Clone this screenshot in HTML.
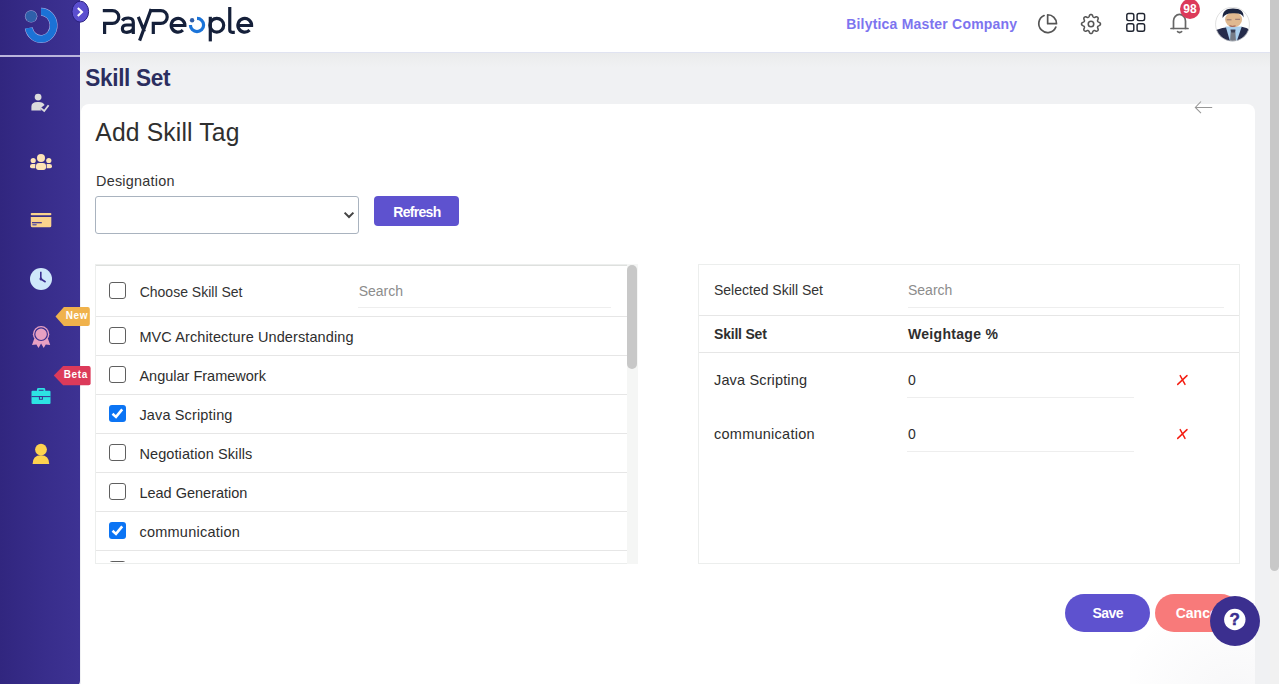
<!DOCTYPE html>
<html><head><meta charset="utf-8">
<style>
*{box-sizing:border-box;margin:0;padding:0}
html,body{width:1279px;height:684px;overflow:hidden;background:#f0f1f3;font-family:"Liberation Sans",sans-serif;color:#333}
.a{position:absolute;white-space:nowrap;line-height:1}
#sb{position:absolute;left:0;top:0;width:80px;height:687px;background:linear-gradient(90deg,#31267f 0%,#382d8b 55%,#3d3293 100%);border-bottom-right-radius:6px}
#hdr{position:absolute;left:80px;top:0;width:1190px;height:53px;background:#fff;border-bottom:1px solid #e0e3f1}
#card{position:absolute;left:81px;top:104px;width:1174px;height:600px;background:#fff;border-radius:8px}
#pscroll{position:absolute;left:1270px;top:0;width:9px;height:684px;background:#f1f1f1}
#pthumb{position:absolute;left:1270px;top:0;width:9px;height:571px;background:#c8c8c8;border-radius:0 0 5px 5px}
.panel{position:absolute;background:#fff;border:1px solid #eceeed}
.hl{position:absolute;height:1px;background:#e6e6e6}
.cb{position:absolute;width:17px;height:17px;border:1.5px solid #5f5f5f;border-radius:3px;background:#fff}
.cbc{position:absolute;width:17px;height:17px;border-radius:3px;background:#0b74f4}
.t14{font-size:14px;color:#333}
.li{font-size:14.5px;color:#2e2e2e}
</style></head><body>
<div id="pscroll"></div><div id="pthumb"></div>
<div class="a" style="left:80px;top:53px;width:1190px;height:14px;background:linear-gradient(180deg,#eaebec,rgba(240,241,243,0))"></div>
<div id="hdr"></div>
<div id="card"></div>

<!-- sidebar -->
<div id="sb"></div>
<div class="a" style="left:0;top:55px;width:80px;height:2px;background:#bab5dc"></div>
<svg class="a" style="left:0;top:0" width="100" height="60" viewBox="0 0 100 60">
  <path d="M41.05 11.75 A12.55 13.65 0 1 1 28.73 28" fill="none" stroke="#bdb6e6" stroke-width="7.9"/><path d="M41.05 11.75 A12.55 13.65 0 1 1 28.73 28" fill="none" stroke="#1b72d6" stroke-width="7"/>
  <circle cx="31.15" cy="16.35" r="6.2" fill="#a9a3d8"/><circle cx="31.15" cy="16.35" r="5.7" fill="#2f60aa"/>
  <ellipse cx="80.3" cy="11.65" rx="8.3" ry="10.5" fill="#5b4fcf" stroke="#2a2080" stroke-width="1"/>
  <path d="M77.8 7.9 L82 11.9 L77.8 16" fill="none" stroke="#fff" stroke-width="2.1"/>
</svg>
<!-- icon1 person check -->
<svg class="a" style="left:0;top:80px" width="80" height="40" viewBox="0 80 80 40">
  <circle cx="38.1" cy="97.1" r="3.4" fill="#dcdcdc"/>
  <path d="M31.4 110.4 V106.5 Q31.4 102 37.5 102 H39 Q43 102 44.6 105 L40 108.5 L41.5 110.4 Z" fill="#dcdcdc"/>
  <path d="M40.2 107.6 L44.2 111 L48.6 105.3" fill="none" stroke="#dcdcdc" stroke-width="1.8"/>
</svg>
<!-- icon2 group -->
<svg class="a" style="left:0;top:140px" width="80" height="40" viewBox="0 140 80 40">
  <g fill="#fde3b6">
  <circle cx="41" cy="158.1" r="4"/>
  <path d="M36 166 Q36 163.1 39 163.1 H43 Q46 163.1 46 166 V167.3 Q46 169.9 43.4 169.9 H38.6 Q36 169.9 36 167.3 Z"/>
  <circle cx="33.2" cy="160.5" r="2.6"/>
  <path d="M30 166.3 Q30 164 32.3 164 H35.3 V168.2 H31.8 Q30 168.2 30 166.6 Z"/>
  <circle cx="48.8" cy="160.5" r="2.6"/>
  <path d="M46.7 168.2 V164 H49.7 Q52 164 52 166.3 V166.6 Q52 168.2 50.2 168.2 Z"/>
  </g>
</svg>
<!-- icon3 card -->
<svg class="a" style="left:0;top:200px" width="80" height="40" viewBox="0 200 80 40">
  <rect x="30.8" y="212.9" width="20.5" height="2.4" rx="0.8" fill="#fbd38d"/>
  <path d="M30.8 217 H51.3 V225.7 Q51.3 227.2 49.8 227.2 H32.3 Q30.8 227.2 30.8 225.7 Z" fill="#fbd38d"/>
  <rect x="32" y="222.1" width="9.8" height="1.2" fill="#3a2e8f"/>
  <rect x="32.2" y="224" width="4.6" height="1.5" rx="0.7" fill="#6a63a8"/>
</svg>
<!-- icon4 clock -->
<svg class="a" style="left:0;top:258px" width="80" height="40" viewBox="0 258 80 40">
  <circle cx="41" cy="279" r="11" fill="#cfe8fa"/>
  <path d="M40.8 271.8 V279 L45.6 282" fill="none" stroke="#3a2e8f" stroke-width="1.6"/>
  <circle cx="40.9" cy="279" r="1.4" fill="#3a2e8f"/>
</svg>
<!-- icon5 award -->
<svg class="a" style="left:0;top:320px" width="80" height="30" viewBox="0 320 80 30">
  <path d="M34.3 338.5 L32 345 L36.4 344.5 L38.5 348 L41.1 343.5 L43.7 348 L45.8 344.5 L50.2 345 L47.9 338.5 Z" fill="#e8a0c2"/>
  <circle cx="41.1" cy="334.2" r="8.2" fill="#e8a0c2"/>
  <circle cx="41.1" cy="334.2" r="6.3" fill="none" stroke="#392d8e" stroke-width="1.2"/>
</svg>
<!-- New tag -->
<svg class="a" style="left:50px;top:300px" width="45" height="30" viewBox="50 300 45 30">
  <path d="M55.5 316.5 L63.9 307 H87.8 Q89.8 307 89.8 309 V324 Q89.8 326 87.8 326 H63.9 Z" fill="#f0b24c"/>
</svg>
<div class="a" style="left:65.8px;top:311px;font-size:10px;font-weight:700;color:#fff;letter-spacing:0.6px">New</div>
<!-- Beta tag -->
<svg class="a" style="left:50px;top:360px" width="45" height="30" viewBox="50 360 45 30">
  <path d="M53.8 375.5 L63.1 366 H88.6 Q90.6 366 90.6 368 V383.2 Q90.6 385.2 88.6 385.2 H63.1 Z" fill="#dc3a5a"/>
</svg>
<div class="a" style="left:63.8px;top:370px;font-size:10px;font-weight:700;color:#fff;letter-spacing:0.6px">Beta</div>
<!-- icon6 briefcase -->
<svg class="a" style="left:0;top:380px" width="80" height="30" viewBox="0 380 80 30">
  <path d="M37.8 391 V389.3 Q37.8 388.8 38.6 388.8 H43.6 Q44.4 388.8 44.4 389.3 V391" fill="none" stroke="#2de3e3" stroke-width="1.7"/>
  <rect x="31.5" y="390.7" width="19" height="13.3" rx="1" fill="#2de3e3"/>
  <rect x="31.5" y="396.1" width="19" height="1" fill="#3a2e8f"/>
  <rect x="38.9" y="396.1" width="4" height="3.7" rx="0.4" fill="#3a2e8f"/>
  <rect x="39.9" y="397.1" width="2" height="1.7" fill="#2de3e3"/>
</svg>
<!-- icon7 person -->
<svg class="a" style="left:0;top:435px" width="80" height="40" viewBox="0 435 80 40">
  <g fill="#fdd24f">
  <circle cx="41" cy="449.6" r="5.9"/>
  <path d="M32.6 464 Q32.6 455.2 41 455.2 Q49.2 455.2 49.2 464 Z"/>
  </g>
</svg>

<!-- header -->
<svg class="a" style="left:95px;top:0" width="170" height="50" viewBox="95 0 170 50" fill="none" stroke="#15203a" stroke-width="3.2">
  <path d="M102.8 10.6 H112.4 A6.4 6.4 0 0 1 112.4 23.4 H104.6 V33.9"/>
  <path d="M122.3 20.6 Q124 18 128.3 18 Q133.3 18 133.3 22.5 V33.9"/>
  <path d="M133.3 25 H126.8 Q122.4 25 122.4 28.7 Q122.4 32.3 126.8 32.3 Q131.3 32.3 133.3 29.2"/>
  <path d="M138.3 16.8 L144.4 31.6 M151.2 9 L139.6 40.6"/>
  <path d="M149.6 10.6 H160.8 A6.4 6.4 0 0 1 160.8 23.4 H153.3 V33.9"/>
  <path d="M171.3 25.5 H184.9 A6.85 6.85 0 1 0 182.9 30.1"/>
  <path d="M210.3 41.4 V16.8"/><circle cx="216.8" cy="25.2" r="6.9"/>
  <path d="M229.75 6.9 V29.8 Q229.75 32.3 232.3 32.3 H234.8"/>
  <path d="M238 25.5 H251.6 A6.85 6.85 0 1 0 249.6 30.1"/>
  <path d="M197 18.35 A6.6 6.6 0 1 1 190.4 24.95" stroke="#1b74d9"/>
  <circle cx="192.1" cy="20.3" r="2.2" fill="#2f5ea8" stroke="none"/>
</svg>
<div class="a" style="left:846.2px;top:17px;font-size:14px;font-weight:700;color:#7d74ef;letter-spacing:0.2px">Bilytica Master Company</div>
<svg class="a" style="left:1036.8px;top:13.3px" width="21.3" height="21.3" viewBox="0 0 24 24" fill="none" stroke="#555" stroke-width="1.9" stroke-linecap="round" stroke-linejoin="round">
  <path d="M21.21 15.89A10 10 0 1 1 8 2.83"/><path d="M22 12A10 10 0 0 0 12 2v10z"/>
</svg>
<svg class="a" style="left:1079.1px;top:11.9px" width="24" height="24" viewBox="-12 -12 24 24" fill="none" stroke="#555" stroke-width="1.55">
  <path d="M0.00 -9.50 L0.37 -9.45 L0.73 -9.31 L1.07 -9.08 L1.39 -8.75 L1.63 -8.19 L1.83 -7.63 L2.05 -7.27 L2.27 -7.00 L2.51 -6.79 L2.76 -6.65 L3.03 -6.57 L3.34 -6.56 L3.69 -6.59 L4.10 -6.69 L4.64 -6.94 L5.21 -7.16 L5.66 -7.18 L6.07 -7.10 L6.42 -6.95 L6.72 -6.72 L6.95 -6.42 L7.10 -6.07 L7.18 -5.66 L7.16 -5.21 L6.94 -4.64 L6.69 -4.10 L6.59 -3.69 L6.56 -3.34 L6.57 -3.03 L6.65 -2.76 L6.79 -2.51 L7.00 -2.27 L7.27 -2.05 L7.63 -1.83 L8.19 -1.63 L8.75 -1.39 L9.08 -1.07 L9.31 -0.73 L9.45 -0.37 L9.50 0.00 L9.45 0.37 L9.31 0.73 L9.08 1.07 L8.75 1.39 L8.19 1.63 L7.63 1.83 L7.27 2.05 L7.00 2.27 L6.79 2.51 L6.65 2.76 L6.57 3.03 L6.56 3.34 L6.59 3.69 L6.69 4.10 L6.94 4.64 L7.16 5.21 L7.18 5.66 L7.10 6.07 L6.95 6.42 L6.72 6.72 L6.42 6.95 L6.07 7.10 L5.66 7.18 L5.21 7.16 L4.64 6.94 L4.10 6.69 L3.69 6.59 L3.34 6.56 L3.03 6.57 L2.76 6.65 L2.51 6.79 L2.27 7.00 L2.05 7.27 L1.83 7.63 L1.63 8.19 L1.39 8.75 L1.07 9.08 L0.73 9.31 L0.37 9.45 L0.00 9.50 L-0.37 9.45 L-0.73 9.31 L-1.07 9.08 L-1.39 8.75 L-1.63 8.19 L-1.83 7.63 L-2.05 7.27 L-2.27 7.00 L-2.51 6.79 L-2.76 6.65 L-3.03 6.57 L-3.34 6.56 L-3.69 6.59 L-4.10 6.69 L-4.64 6.94 L-5.21 7.16 L-5.66 7.18 L-6.07 7.10 L-6.42 6.95 L-6.72 6.72 L-6.95 6.42 L-7.10 6.07 L-7.18 5.66 L-7.16 5.21 L-6.94 4.64 L-6.69 4.10 L-6.59 3.69 L-6.56 3.34 L-6.57 3.03 L-6.65 2.76 L-6.79 2.51 L-7.00 2.27 L-7.27 2.05 L-7.63 1.83 L-8.19 1.63 L-8.75 1.39 L-9.08 1.07 L-9.31 0.73 L-9.45 0.37 L-9.50 0.00 L-9.45 -0.37 L-9.31 -0.73 L-9.08 -1.07 L-8.75 -1.39 L-8.19 -1.63 L-7.63 -1.83 L-7.27 -2.05 L-7.00 -2.27 L-6.79 -2.51 L-6.65 -2.76 L-6.57 -3.03 L-6.56 -3.34 L-6.59 -3.69 L-6.69 -4.10 L-6.94 -4.64 L-7.16 -5.21 L-7.18 -5.66 L-7.10 -6.07 L-6.95 -6.42 L-6.72 -6.72 L-6.42 -6.95 L-6.07 -7.10 L-5.66 -7.18 L-5.21 -7.16 L-4.64 -6.94 L-4.10 -6.69 L-3.69 -6.59 L-3.34 -6.56 L-3.03 -6.57 L-2.76 -6.65 L-2.51 -6.79 L-2.27 -7.00 L-2.05 -7.27 L-1.83 -7.63 L-1.63 -8.19 L-1.39 -8.75 L-1.07 -9.08 L-0.73 -9.31 L-0.37 -9.45Z"/><circle cx="0" cy="0" r="2.75"/>
</svg>
<svg class="a" style="left:1120px;top:8px" width="30" height="30" viewBox="1120 8 30 30" fill="none" stroke="#1f2430" stroke-width="1.45">
  <rect x="1126.8" y="13.5" width="7" height="7.1" rx="1.8"/>
  <rect x="1137.1" y="13.5" width="7.5" height="7.1" rx="1.8"/>
  <rect x="1126.8" y="23.8" width="7" height="7.5" rx="1.8"/>
  <rect x="1137.1" y="23.8" width="7.5" height="7.5" rx="1.8"/>
</svg>
<svg class="a" style="left:1165px;top:0" width="40" height="40" viewBox="1165 0 40 40" fill="none" stroke="#666" stroke-width="1.7" stroke-linecap="round">
  <path d="M1173.5 28.5 V21 A6 6.6 0 0 1 1185.5 21 V28.5"/>
  <path d="M1171 28.5 H1188"/>
  <path d="M1177.6 31.6 Q1179.6 33.4 1181.6 31.6"/>
  <circle cx="1190" cy="9" r="10" fill="#dc3a5a" stroke="none"/>
</svg>
<div class="a" style="left:1183.3px;top:2.8px;font-size:12px;font-weight:700;color:#fff">98</div>
<!-- avatar -->
<svg class="a" style="left:1215px;top:7px" width="35" height="35" viewBox="0 0 35 35">
  <defs><clipPath id="av"><circle cx="17.5" cy="17.2" r="17.1"/></clipPath></defs>
  <g clip-path="url(#av)">
  <rect width="35" height="35" fill="#fff"/>
  <path d="M10.5 19.5 H26.8 L25 35 H12Z" fill="#a9cfee"/>
  <path d="M0 35 V24 Q3 21.5 11 20.5 L15.2 35Z" fill="#252b4b"/>
  <path d="M35 35 V23 Q32 20.5 26.7 19.8 L21.5 35Z" fill="#252b4b"/>
  <path d="M15.8 23 H20.3 L21 35 H15Z" fill="#767b86"/>
  <path d="M15.5 22.5 H20.5 L19.8 25.5 H16.3Z" fill="#3a3f55"/>
  <ellipse cx="18.6" cy="12.6" rx="8.5" ry="7.6" fill="#e0b990"/>
  <path d="M14.5 18.8 Q17.5 20.2 20.5 18.9 Q17.5 19.6 14.5 18.8Z" fill="#8a4a4a" stroke="#9a5a55" stroke-width="0.6"/>
  <path d="M11.8 12.8 H16.5 M20.2 12.3 H25" stroke="#8a6a6a" stroke-width="0.9"/>
  <path d="M7.6 11 Q7 1.2 18.2 1.4 Q29.2 1.4 28.5 10.5 Q27.5 5.8 18.2 6.2 Q10 6 7.6 11Z" fill="#1c2540"/>
  </g>
  <circle cx="17.5" cy="17.2" r="16.95" fill="none" stroke="#d2d2d2" stroke-width="0.7"/>
</svg>

<!-- page title -->
<div class="a" style="left:85.3px;top:67px;font-size:22.6px;letter-spacing:-0.35px;transform:scaleY(1.06);transform-origin:0 0;font-weight:700;color:#2b2e5f">Skill Set</div>
<div class="a" style="left:95.3px;top:120px;font-size:24.7px;color:#2f2f2f;letter-spacing:0.15px;transform:scaleY(1.06);transform-origin:0 3.5px">Add Skill Tag</div>
<svg class="a" style="left:1193px;top:100px" width="22" height="15" viewBox="1193 100 22 15" fill="none" stroke="#979797" stroke-width="1.05">
  <path d="M1212.2 107.4 H1195.5 M1201 101.5 L1195.3 107.4 L1201 113.2"/>
</svg>

<div class="a" style="left:96px;top:174px;font-size:14.4px;color:#333;letter-spacing:0.25px">Designation</div>
<div class="a" style="left:95px;top:196px;width:264px;height:38px;border:1px solid #a9b3bf;border-radius:3px;background:#fff"></div>
<svg class="a" style="left:340px;top:205px" width="20" height="20" viewBox="340 205 20 20" fill="none" stroke="#444" stroke-width="2">
  <path d="M344.6 212.6 L349 217 L353.4 212.6"/>
</svg>
<div class="a" style="left:374px;top:196px;width:85px;height:30px;background:#5e52cf;border-radius:4px"></div>
<div class="a" style="left:393.3px;top:205px;font-size:14px;font-weight:700;color:#fff;letter-spacing:-0.7px">Refresh</div>

<!-- left panel -->
<div class="panel" style="left:95px;top:264px;width:543px;height:300px"></div>
<div class="hl" style="left:96px;top:265px;width:531px;background:#dee0de"></div>
<div class="a" style="left:627px;top:264px;width:11px;height:300px;background:#f5f6f5"></div>
<div class="a" style="left:627px;top:265px;width:10px;height:104px;background:#c8c8c8;border-radius:5px"></div>
<div class="cb" style="left:109px;top:282px"></div>
<div class="a t14" style="left:139.7px;top:285px">Choose Skill Set</div>
<div class="a" style="left:358.7px;top:284px;font-size:14px;color:#8c8c8c">Search</div>
<div class="hl" style="left:358px;top:307px;width:253px;background:#eeeeee"></div>
<div class="hl" style="left:96px;top:316px;width:531px"></div>
<div class="hl" style="left:96px;top:355px;width:531px"></div>
<div class="hl" style="left:96px;top:394px;width:531px"></div>
<div class="hl" style="left:96px;top:433px;width:531px"></div>
<div class="hl" style="left:96px;top:472px;width:531px"></div>
<div class="hl" style="left:96px;top:511px;width:531px"></div>
<div class="hl" style="left:96px;top:550px;width:531px"></div>

<div class="cb" style="left:109px;top:327px"></div>
<div class="a li" style="left:139.4px;top:330px;letter-spacing:0.1px">MVC Architecture Understanding</div>
<div class="cb" style="left:109px;top:366px"></div>
<div class="a li" style="left:139.4px;top:369px">Angular Framework</div>
<div class="cbc" style="left:109px;top:405px"></div>
<svg class="a" style="left:109px;top:405px" width="17" height="17" viewBox="0 0 17 17"><path d="M3.5 8.8 L7 11.9 L13.2 4.4" fill="none" stroke="#fff" stroke-width="2.6"/></svg>
<div class="a li" style="left:139.4px;top:408px;letter-spacing:0.15px">Java Scripting</div>
<div class="cb" style="left:109px;top:444px"></div>
<div class="a li" style="left:139.4px;top:447px;letter-spacing:0.1px">Negotiation Skills</div>
<div class="cb" style="left:109px;top:483px"></div>
<div class="a li" style="left:139.4px;top:486px">Lead Generation</div>
<div class="cbc" style="left:109px;top:522px"></div>
<svg class="a" style="left:109px;top:522px" width="17" height="17" viewBox="0 0 17 17"><path d="M3.5 8.8 L7 11.9 L13.2 4.4" fill="none" stroke="#fff" stroke-width="2.6"/></svg>
<div class="a li" style="left:139.4px;top:525px;letter-spacing:0.25px">communication</div>
<div style="position:absolute;left:96px;top:551px;width:531px;height:11px;overflow:hidden"><div class="cb" style="left:13px;top:10px"></div></div>

<!-- right panel -->
<div class="panel" style="left:698px;top:264px;width:542px;height:300px"></div>
<div class="a t14" style="left:714px;top:283px">Selected Skill Set</div>
<div class="a" style="left:908px;top:283px;font-size:14px;color:#8c8c8c">Search</div>
<div class="hl" style="left:907.5px;top:307px;width:316px;background:#eeeeee"></div>
<div class="hl" style="left:699px;top:315px;width:540px"></div>
<div class="a" style="left:714px;top:327px;font-size:14px;font-weight:700;color:#2e2e2e;letter-spacing:-0.2px">Skill Set</div>
<div class="a" style="left:908px;top:327px;font-size:14px;font-weight:700;color:#2e2e2e;letter-spacing:0.3px">Weightage %</div>
<div class="hl" style="left:699px;top:352px;width:540px"></div>
<div class="a li" style="left:714px;top:373px;letter-spacing:0.15px">Java Scripting</div>
<div class="a" style="left:908px;top:373px;font-size:14px;color:#2e2e2e">0</div>
<div class="hl" style="left:907px;top:397px;width:227px;background:#eeeeee"></div>
<svg class="a" style="left:1172px;top:370px" width="20" height="20" viewBox="1172 370 20 20" fill="none" stroke="#f41c10" stroke-width="1.45" stroke-linecap="round"><path d="M1180.2 375.6 L1185 384.4 M1187 375.6 L1177.7 384.4"/></svg>
<div class="a li" style="left:714px;top:427px;letter-spacing:0.25px">communication</div>
<div class="a" style="left:908px;top:427px;font-size:14px;color:#2e2e2e">0</div>
<div class="hl" style="left:907px;top:451px;width:227px;background:#eeeeee"></div>
<svg class="a" style="left:1172px;top:424px" width="20" height="20" viewBox="1172 370 20 20" fill="none" stroke="#f41c10" stroke-width="1.45" stroke-linecap="round"><path d="M1180.2 375.6 L1185 384.4 M1187 375.6 L1177.7 384.4"/></svg>

<!-- buttons -->
<div class="a" style="left:1130px;top:600px;width:125px;height:84px;background:radial-gradient(ellipse 120px 90px at 105px 90px,rgba(40,40,80,0.035),rgba(40,40,80,0) 100%)"></div>
<div class="a" style="left:1065px;top:594px;width:85px;height:38px;border-radius:19px;background:#5e52cf"></div>
<div class="a" style="left:1092.4px;top:606px;font-size:14px;font-weight:700;color:#fff;letter-spacing:-0.5px">Save</div>
<div class="a" style="left:1155px;top:594px;width:85px;height:38px;border-radius:19px;background:#f87a7a"></div>
<div class="a" style="left:1175.7px;top:606px;font-size:14px;font-weight:700;color:#fff">Cancel</div>
<svg class="a" style="left:1205px;top:591px" width="60" height="60" viewBox="1205 591 60 60">
  <circle cx="1235" cy="621" r="25" fill="#3b2f8f"/>
  <circle cx="1234.8" cy="619.5" r="10.7" fill="#fff"/>
</svg>
<div class="a" style="left:1229.6px;top:610.6px;font-size:17px;font-weight:700;color:#3b2f8f;-webkit-text-stroke:0.5px #3b2f8f">?</div>
</body></html>
